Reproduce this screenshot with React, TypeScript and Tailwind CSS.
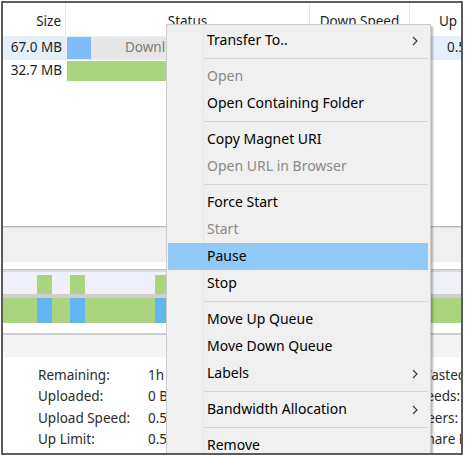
import React from "react";

type Item =
  | { kind: "item"; label: string; disabled?: boolean; sub?: boolean; active?: boolean }
  | { kind: "sep" };

const items: Item[] = [
  { kind: "item", label: "Transfer To..", sub: true },
  { kind: "sep" },
  { kind: "item", label: "Open", disabled: true },
  { kind: "item", label: "Open Containing Folder" },
  { kind: "sep" },
  { kind: "item", label: "Copy Magnet URI" },
  { kind: "item", label: "Open URL in Browser", disabled: true },
  { kind: "sep" },
  { kind: "item", label: "Force Start" },
  { kind: "item", label: "Start", disabled: true },
  { kind: "item", label: "Pause", active: true },
  { kind: "item", label: "Stop" },
  { kind: "sep" },
  { kind: "item", label: "Move Up Queue" },
  { kind: "item", label: "Move Down Queue" },
  { kind: "item", label: "Labels", sub: true },
  { kind: "sep" },
  { kind: "item", label: "Bandwidth Allocation", sub: true },
  { kind: "sep" },
  { kind: "item", label: "Remove" },
];

function Chevron() {
  return (
    <svg width="6" height="10" viewBox="0 0 6 10" className="shrink-0">
      <polyline points="1,1 5,5 1,9" fill="none" stroke="#333" strokeWidth="1.1" />
    </svg>
  );
}

function Menu() {
  return (
    <div className="absolute left-[163px] top-[21px] w-[265px] h-[460px] bg-[#f0f0f0] border border-[#cdcdcd] pt-[2px] pl-px pr-[2px] shadow-[2px_2px_2px_rgba(0,0,0,0.28)] text-[14px]">
      <div className="absolute left-[36px] top-0 bottom-0 w-px bg-[#e6e6e6]" />
      {items.map((it, i) =>
        it.kind === "sep" ? (
          <div key={i} className="h-[9px] flex items-center pl-[35px]">
            <div className="h-px w-full bg-[#d5d5d5]" />
          </div>
        ) : (
          <div
            key={i}
            className={
              "relative h-[27px] flex items-center pl-[39px] pr-[10px] " +
              (it.active ? "bg-[#91c9f7] " : "") +
              (it.disabled ? "text-[#8a8a8a]" : "text-[#000000]")
            }
          >
            <span className="flex-1 leading-none pb-[2px]">{it.label}</span>
            {it.sub && <Chevron />}
          </div>
        )
      )}
    </div>
  );
}

function Blocks({ color, bg, h }: { color: string; bg: string; h: string }) {
  return (
    <div className={"flex " + h + " " + bg}>
      <div className="w-[34px] shrink-0" />
      <div className={"w-[15px] shrink-0 " + color} />
      <div className="w-[18px] shrink-0" />
      <div className={"w-[15px] shrink-0 " + color} />
      <div className="w-[70px] shrink-0" />
      <div className={"w-[15px] shrink-0 " + color} />
      <div className="w-[60px] shrink-0" />
      <div className={"w-[15px] shrink-0 " + color} />
    </div>
  );
}

export default function App() {
  return (
    <div className="w-[465px] h-[456px] bg-white p-px font-['Noto_Sans',sans-serif]">
      <div className="relative w-[462px] h-[454px] border-2 border-[#5b5b5b] overflow-hidden flex flex-col text-[13.5px] text-[#1e1e1e]">
        {/* header */}
        <div className="flex h-[33px] shrink-0 bg-white">
          <div className="w-[63px] shrink-0 flex items-center justify-end pr-[4px] border-r border-[#e5e5e5] pt-[4px]">Size</div>
          <div className="w-[244px] shrink-0 flex items-center justify-center border-r border-[#e5e5e5] pt-[4px]">Status</div>
          <div className="w-[100px] shrink-0 flex items-center justify-center border-r border-[#e5e5e5] pt-[4px]">Down Speed</div>
          <div className="flex-1 min-w-0 overflow-hidden flex items-center pl-[29px] whitespace-nowrap pt-[4px]">Up Speed</div>
        </div>
        {/* row 1 */}
        <div className="flex h-[24px] shrink-0 bg-[#e5f0fb]">
          <div className="w-[63px] shrink-0 flex items-center justify-end pr-[4px] pb-[1px]">67.0 MB</div>
          <div className="w-[244px] shrink-0 pl-px py-px">
            <div className="h-full flex items-center justify-start pl-[58px] whitespace-nowrap text-[#7c7c7c] bg-[linear-gradient(to_right,#80bcf8_24px,#e6e6e6_24px)] pb-[1px]">
              Downloading 9.8 %
            </div>
          </div>
          <div className="w-[100px] shrink-0" />
          <div className="flex-1 min-w-0 overflow-hidden flex items-center pl-[37px] whitespace-nowrap pb-[1px]">0.5 kB/s</div>
        </div>
        {/* row 2 */}
        <div className="flex h-[22px] shrink-0">
          <div className="w-[63px] shrink-0 flex items-center justify-end pr-[4px] pb-[1px]">32.7 MB</div>
          <div className="w-[244px] shrink-0 pl-px py-px">
            <div className="h-full bg-[#aad47d]" />
          </div>
        </div>
        <div className="flex-1 bg-white" />
        {/* lower panels */}
        <div className="h-px shrink-0 bg-[#b5b5b5]" />
        <div className="h-px shrink-0 bg-[#dcdcdc]" />
        <div className="h-[34px] shrink-0 bg-[#f0f0f0]" />
        <div className="h-[7px] shrink-0 bg-white" />
        <div className="h-px shrink-0 bg-[#c2c2c2]" />
        <div className="h-[2px] shrink-0 bg-[#dadada]" />
        <div className="h-[22px] shrink-0 bg-[#f0f0fb] pt-[3px]">
          <Blocks color="bg-[#aad47d]" bg="" h="h-full" />
        </div>
        <div className="h-[4px] shrink-0 bg-[#cfcfcf]" />
        <Blocks color="bg-[#63b6f0]" bg="bg-[#aad47d]" h="h-[25px] shrink-0" />
        <div className="h-[10px] shrink-0 bg-white" />
        <div className="h-[2px] shrink-0 bg-[#cdcdcd]" />
        <div className="h-[22px] shrink-0 bg-[#f4f4f4]" />
        <div className="flex-none h-[96px] bg-white pt-[8px] pl-[35px] text-[#2b2b2b] leading-[21.4px]">
          <div className="grid grid-cols-[110px_271px_auto] whitespace-nowrap">
            <span>Remaining:</span>
            <span>1h 23m 10s</span>
            <span>Wasted:</span>
            <span>Uploaded:</span>
            <span>0 B</span>
            <span>Seeds:</span>
            <span>Upload Speed:</span>
            <span>0.5 kB/s</span>
            <span>Peers:</span>
            <span>Up Limit:</span>
            <span>0.5 kB/s</span>
            <span>Share Ratio:</span>
          </div>
        </div>
        <Menu />
      </div>
    </div>
  );
}
